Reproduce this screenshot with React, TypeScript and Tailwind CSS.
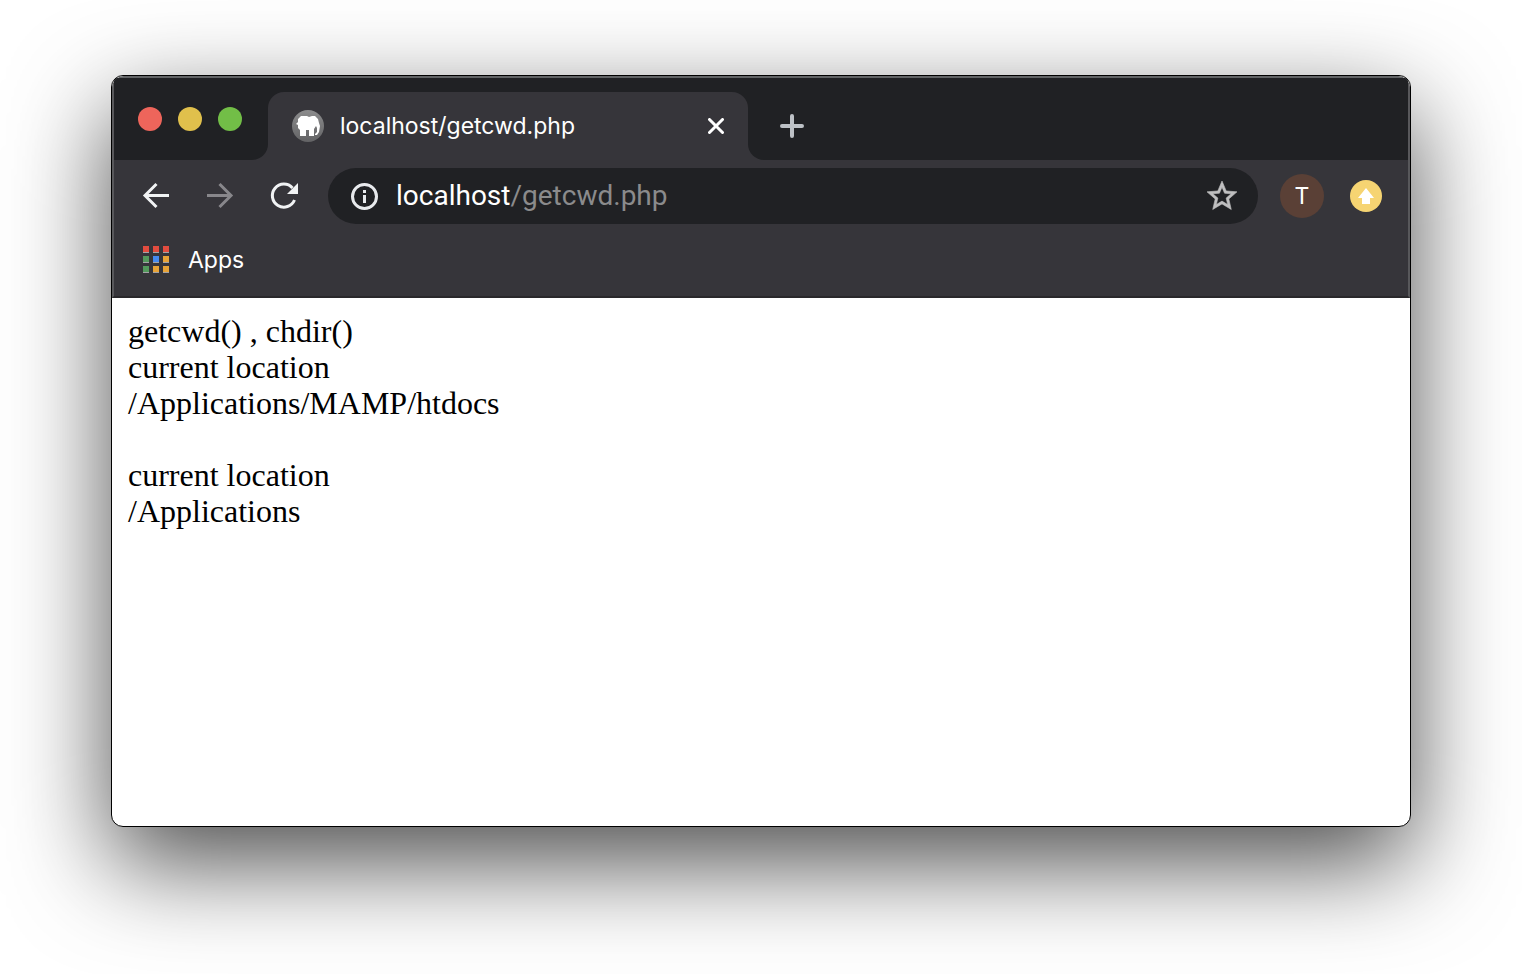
const APPS_COLORS = [
  "#e24c3f", "#e24c3f", "#e24c3f",
  "#539a5c", "#4489f0", "#e8a337",
  "#539a5c", "#e8a337", "#e8a337",
];

const PAGE_LINES = [
  "getcwd() , chdir()",
  "current location",
  "/Applications/MAMP/htdocs",
  "",
  "current location",
  "/Applications",
];

function ElephantIcon() {
  return (
    <svg className="size-8 shrink-0" viewBox="0 0 32 32" aria-hidden="true">
      <defs>
        <linearGradient id="badge" x1="0" y1="0" x2="0" y2="1">
          <stop offset="0" stopColor="#8c8c8d" />
          <stop offset="1" stopColor="#636365" />
        </linearGradient>
      </defs>
      <circle cx="16" cy="16" r="16" fill="url(#badge)" />
      <path
        d="M4 14l2-2V9l3-3h6l2 1 3-1h3l3 3 1 4 1 3-1 6-2 3h-2v-1l2-2v-4l-1-2-2 3v7h-5v-6h-3v6H8v-6l-2-2v-3z"
        fill="#fff"
      />
    </svg>
  );
}

function TabStrip() {
  return (
    <div className="flex h-[82px] items-end bg-[#202124] pl-6">
      <div className="mr-2.5 flex gap-4 self-center">
        <button className="size-6 rounded-full bg-[#ee655b]" aria-label="Close window" />
        <button className="size-6 rounded-full bg-[#e0c04c]" aria-label="Minimize window" />
        <button className="size-6 rounded-full bg-[#72be47]" aria-label="Zoom window" />
      </div>

      <div className="size-4 bg-[#36353a]">
        <div className="size-4 rounded-br-2xl bg-[#202124]" />
      </div>
      <div className="flex h-[68px] w-[480px] items-center gap-4 rounded-t-2xl bg-[#36353a] px-6">
        <ElephantIcon />
        <span className="flex-1 text-[23px] text-white">localhost/getcwd.php</span>
        <button aria-label="Close tab">
          <svg className="size-4" viewBox="0 0 16 16" stroke="#fff" strokeWidth="3" strokeLinecap="round">
            <path d="M1.500 1.500 14.500 14.500M14.500 1.500 1.500 14.500" />
          </svg>
        </button>
      </div>
      <div className="size-4 bg-[#36353a]">
        <div className="size-4 rounded-bl-2xl bg-[#202124]" />
      </div>

      <button className="ml-4 flex h-[68px] items-center" aria-label="New tab">
        <svg className="size-6" viewBox="0 0 24 24" stroke="#bdc1c6" strokeWidth="4" strokeLinecap="round">
          <path d="M12 2v20M2 12h20" />
        </svg>
      </button>
    </div>
  );
}

function Toolbar() {
  return (
    <div className="flex h-[72px] items-center pr-[26px] pl-[18px]">
      <div className="mr-5 flex gap-4">
        <button className="flex size-12 items-center justify-center" aria-label="Back">
          <svg className="size-8" viewBox="0 0 32 32" fill="none" stroke="#f1f3f4" strokeWidth="3">
            <path d="M29 15.500H5M16.500 4 5 15.500 16.500 27" />
          </svg>
        </button>
        <button className="flex size-12 items-center justify-center" aria-label="Forward">
          <svg className="size-8" viewBox="0 0 32 32" fill="none" stroke="#88878b" strokeWidth="3">
            <path d="M3 15.500h24M15.500 4 27 15.500 15.500 27" />
          </svg>
        </button>
        <button className="flex size-12 items-center justify-center" aria-label="Reload">
          <svg className="size-8" viewBox="0 0 32 32" fill="none">
            <path d="M26.500 20A11.500 11.500 0 1 1 24.500 8" stroke="#f1f3f4" strokeWidth="3" />
            <path d="M30 3v11H19z" fill="#f1f3f4" />
          </svg>
        </button>
      </div>

      <div className="flex h-14 min-w-0 flex-1 items-center rounded-full bg-[#202124] pr-[18px] pl-5">
        <button className="mr-4" aria-label="View site information">
          <svg className="size-8" viewBox="0 0 32 32" fill="none">
            <circle cx="16.500" cy="16.500" r="12" stroke="#e8eaed" strokeWidth="3" />
            <path d="M15 10h3v3h-3zM15 15h3v8h-3z" fill="#e8eaed" />
          </svg>
        </button>
        <label htmlFor="url" className="font-['Roboto',sans-serif] text-[28px] text-white">
          localhost
        </label>
        <input
          id="url"
          type="text"
          defaultValue="/getcwd.php"
          className="min-w-0 flex-1 bg-transparent font-['Roboto',sans-serif] text-[28px] text-[#8b8b8c] outline-none"
        />
        <button aria-label="Bookmark this page">
          <svg className="size-9" viewBox="0 0 24 24" fill="#bfbfc0" stroke="#bfbfc0" strokeWidth="0.400">
            <path d="M22 9.240l-7.190-.620L12 2 9.190 8.630 2 9.240l5.460 4.730L5.820 21 12 17.270 18.180 21l-1.630-7.030L22 9.240zM12 15.400l-3.760 2.270 1-4.280-3.320-2.880 4.380-.380L12 6.100l1.710 4.040 4.380.380-3.320 2.880 1 4.280L12 15.400z" />
          </svg>
        </button>
      </div>

      <button className="ml-[22px] size-11 rounded-full bg-[#5a4036] text-[23px] text-white" aria-label="Profile T">
        T
      </button>
      <button className="ml-[26px]" aria-label="Update">
        <svg className="size-8" viewBox="0 0 32 32">
          <circle cx="16" cy="16" r="16" fill="#f6d472" />
          <path d="M16 8l8 10h-4v6h-8v-6H8z" fill="#fff" />
        </svg>
      </button>
    </div>
  );
}

function BookmarksBar() {
  return (
    <div className="flex h-14 items-center pl-[29px]">
      <button className="flex items-center gap-[19px] text-[23px] text-white">
        <svg className="h-7 w-[26px]" viewBox="0 0 26 28" aria-hidden="true">
          {APPS_COLORS.map((color, i) => {
            const x = (i % 3) * 10;
            const y = Math.floor(i / 3) * 10;
            return (
              <g key={i}>
                <rect x={x} y={y} width="6" height="7" fill="#a3a3a5" />
                <rect x={x} y={y} width="6" height="6" fill={color} />
              </g>
            );
          })}
        </svg>
        Apps
      </button>
    </div>
  );
}

export default function App() {
  return (
    <div className="flex min-h-screen flex-col bg-white px-[111px] pt-[75px] pb-[147px] font-['Inter',sans-serif]">
      <div className="flex flex-1 flex-col overflow-hidden rounded-xl border border-black bg-white shadow-[0_36px_100px_rgba(0,0,0,0.7)]">
        <header className="rounded-t-xl border-2 border-x-[#58585b] border-t-[#626466] border-b-[#29282b] bg-[#36353a]">
          <TabStrip />
          <Toolbar />
          <BookmarksBar />
          <div className="h-2" />
        </header>
        <main className="flex-1 px-4 py-[15px] font-['Liberation_Serif',serif] text-[32px] leading-9 text-black">
          {PAGE_LINES.map((line, i) => (
            <p key={i} className="min-h-9">
              {line}
            </p>
          ))}
        </main>
      </div>
    </div>
  );
}
